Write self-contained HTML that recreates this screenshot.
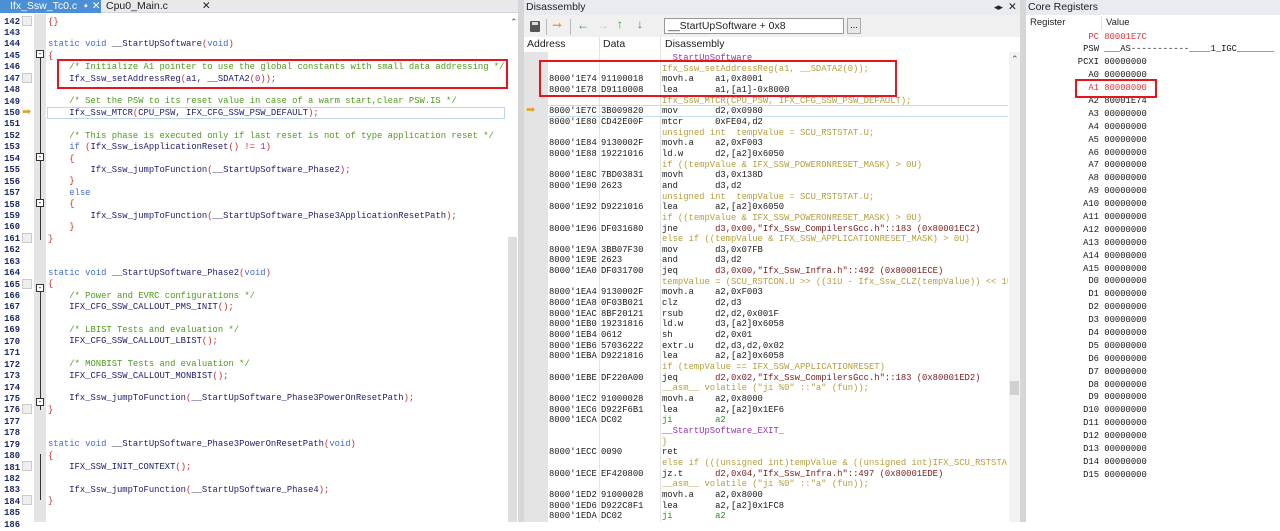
<!DOCTYPE html>
<html><head><meta charset="utf-8"><style>
*{margin:0;padding:0;box-sizing:border-box}
body{width:1280px;height:522px;overflow:hidden;background:#fff;font-family:"Liberation Sans",sans-serif;position:relative}
.mono{font-family:"Liberation Mono",monospace;font-size:8.85px}
.mono div{white-space:pre}
.abs{position:absolute}
.k{color:#3c6cd4}.f{color:#1c1c6a}.c{color:#4f9a1c}.p{color:#c0302a}.n{color:#a020a0}
.s{color:#b59f3b}.lb{color:#9234b0}.st{color:#7a1c1c}
#code div{height:11.43px;line-height:11.43px}
#dis div{height:10.67px;line-height:10.67px}
#dis div.x{padding-left:113px}
#dis i{font-style:normal;display:inline-block;width:52px}
#dis b{font-weight:normal;display:inline-block;width:61px}
#reg div{height:12.9px;line-height:12.9px}
#reg u{text-decoration:none;display:inline-block;width:73px;text-align:right}
</style></head><body>
<!-- left pane -->
<div class="abs" style="left:0;top:0;width:518px;height:13px;background:#e9e9e9;border-bottom:1px solid #cfd6e0"></div>
<div class="abs" style="left:0;top:0;width:101px;height:13px;background:#4b8fd6;color:#fff;font-size:10.5px;line-height:13px;padding-left:10px;white-space:nowrap;overflow:hidden">Ifx_Ssw_Tc0.c <span style="margin-left:4px">&#9642;</span> <span style="margin-left:1px">&#10005;</span></div>
<div class="abs" style="left:106px;top:0;height:13px;font-size:10.5px;line-height:13px;color:#222;white-space:nowrap">Cpu0_Main.c<span style="margin-left:34px">&#10005;</span></div>
<div class="abs" style="left:34px;top:14px;width:12px;height:508px;background:#e4e4e4"></div>
<div class="abs" style="left:508px;top:14px;width:10px;height:508px;background:#fff"></div>
<div class="abs" style="left:508px;top:237px;width:9px;height:285px;background:#dedede"></div>
<div class="abs" style="left:510px;top:17px;font-size:9px;color:#555">&#8963;</div>
<div class="abs" style="left:518px;top:0;width:6px;height:522px;background:#d6d6d6"></div>
<div class="abs" style="left:47px;top:107px;width:458px;height:12px;border:1px solid #bcd4ee"></div>
<div class="abs" style="left:40px;top:54px;width:1px;height:186px;background:#333"></div>
<div class="abs" style="left:40px;top:288px;width:1px;height:122px;background:#333"></div>
<div class="abs" style="left:40px;top:454px;width:1px;height:46px;background:#333"></div>
<div class="abs" style="left:36px;top:50px;width:8px;height:8px;border:1px solid #333;background:#fff;font-size:8px;line-height:5px;text-align:center">-</div>
<div class="abs" style="left:36px;top:153px;width:8px;height:8px;border:1px solid #333;background:#fff;font-size:8px;line-height:5px;text-align:center">-</div>
<div class="abs" style="left:36px;top:199px;width:8px;height:8px;border:1px solid #333;background:#fff;font-size:8px;line-height:5px;text-align:center">-</div>
<div class="abs" style="left:36px;top:284px;width:8px;height:8px;border:1px solid #333;background:#fff;font-size:8px;line-height:5px;text-align:center">-</div>
<div class="abs" style="left:36px;top:398px;width:8px;height:8px;border:1px solid #333;background:#fff;font-size:8px;line-height:5px;text-align:center">-</div>
<div class="abs" style="left:22px;top:16px;width:10px;height:10px;border:1px solid #ccc;background:#eee"></div>
<div class="abs" style="left:22px;top:73px;width:10px;height:10px;border:1px solid #ccc;background:#eee"></div>
<div class="abs" style="left:22px;top:233px;width:10px;height:10px;border:1px solid #ccc;background:#eee"></div>
<div class="abs" style="left:22px;top:279px;width:10px;height:10px;border:1px solid #ccc;background:#eee"></div>
<div class="abs" style="left:22px;top:404px;width:10px;height:10px;border:1px solid #ccc;background:#eee"></div>
<div class="abs" style="left:22px;top:461px;width:10px;height:10px;border:1px solid #ccc;background:#eee"></div>
<div class="abs" style="left:22px;top:495px;width:10px;height:10px;border:1px solid #ccc;background:#eee"></div>
<div class="abs" style="left:22px;top:108px;width:11px;height:9px;color:#e8a020;font-size:11px;line-height:9px">&#10145;</div>
<div class="abs mono" style="left:0;top:16.5px;width:20px;text-align:right;color:#1c2a6a;font-weight:bold;line-height:11.43px;white-space:pre">142
143
144
145
146
147
148
149
150
151
152
153
154
155
156
157
158
159
160
161
162
163
164
165
166
167
168
169
170
171
172
173
174
175
176
177
178
179
180
181
182
183
184
185
186</div>
<div class="abs mono" id="code" style="left:48px;top:16.5px;width:460px;overflow:hidden;height:506px">
<div><span class="p">{}</span></div>
<div> </div>
<div><span class="k">static void</span> <span class="f">__StartUpSoftware</span><span class="p">(</span><span class="k">void</span><span class="p">)</span></div>
<div><span class="p">{</span></div>
<div>    <span class="c">/* Initialize A1 pointer to use the global constants with small data addressing */</span></div>
<div>    <span class="f">Ifx_Ssw_setAddressReg</span><span class="p">(</span><span class="f">a1, __SDATA2</span><span class="p">(</span><span class="n">0</span><span class="p">));</span></div>
<div> </div>
<div>    <span class="c">/* Set the PSW to its reset value in case of a warm start,clear PSW.IS */</span></div>
<div>    <span class="f">Ifx_Ssw_MTCR</span><span class="p">(</span><span class="f">CPU_PSW, IFX_CFG_SSW_PSW_DEFAULT</span><span class="p">);</span></div>
<div> </div>
<div>    <span class="c">/* This phase is executed only if last reset is not of type application reset */</span></div>
<div>    <span class="k">if</span> <span class="p">(</span><span class="f">Ifx_Ssw_isApplicationReset</span><span class="p">() !=</span> <span class="n">1</span><span class="p">)</span></div>
<div>    <span class="p">{</span></div>
<div>        <span class="f">Ifx_Ssw_jumpToFunction</span><span class="p">(</span><span class="f">__StartUpSoftware_Phase2</span><span class="p">);</span></div>
<div>    <span class="p">}</span></div>
<div>    <span class="k">else</span></div>
<div>    <span class="p">{</span></div>
<div>        <span class="f">Ifx_Ssw_jumpToFunction</span><span class="p">(</span><span class="f">__StartUpSoftware_Phase3ApplicationResetPath</span><span class="p">);</span></div>
<div>    <span class="p">}</span></div>
<div><span class="p">}</span></div>
<div> </div>
<div> </div>
<div><span class="k">static void</span> <span class="f">__StartUpSoftware_Phase2</span><span class="p">(</span><span class="k">void</span><span class="p">)</span></div>
<div><span class="p">{</span></div>
<div>    <span class="c">/* Power and EVRC configurations */</span></div>
<div>    <span class="f">IFX_CFG_SSW_CALLOUT_PMS_INIT</span><span class="p">();</span></div>
<div> </div>
<div>    <span class="c">/* LBIST Tests and evaluation */</span></div>
<div>    <span class="f">IFX_CFG_SSW_CALLOUT_LBIST</span><span class="p">();</span></div>
<div> </div>
<div>    <span class="c">/* MONBIST Tests and evaluation */</span></div>
<div>    <span class="f">IFX_CFG_SSW_CALLOUT_MONBIST</span><span class="p">();</span></div>
<div> </div>
<div>    <span class="f">Ifx_Ssw_jumpToFunction</span><span class="p">(</span><span class="f">__StartUpSoftware_Phase3PowerOnResetPath</span><span class="p">);</span></div>
<div><span class="p">}</span></div>
<div> </div>
<div> </div>
<div><span class="k">static void</span> <span class="f">__StartUpSoftware_Phase3PowerOnResetPath</span><span class="p">(</span><span class="k">void</span><span class="p">)</span></div>
<div><span class="p">{</span></div>
<div>    <span class="f">IFX_SSW_INIT_CONTEXT</span><span class="p">();</span></div>
<div> </div>
<div>    <span class="f">Ifx_Ssw_jumpToFunction</span><span class="p">(</span><span class="f">__StartUpSoftware_Phase4</span><span class="p">);</span></div>
<div><span class="p">}</span></div>
</div>
<div class="abs" style="left:57px;top:59px;width:451px;height:30px;border:2px solid #e8141c"></div>

<!-- disassembly pane -->
<div class="abs" style="left:524px;top:0;width:496px;height:15px;background:#e9ebf0;font-size:10.5px;line-height:15px;padding-left:2px;color:#222">Disassembly<span class="abs" style="left:470px;top:0;font-size:9px">&#9666;&#9656;</span><span class="abs" style="left:484px;top:0">&#10005;</span></div>
<div class="abs" style="left:524px;top:15px;width:496px;height:22px;background:#f0f0f0"></div>
<div class="abs" style="left:530px;top:21px;width:10px;height:11px;background:#555;border-radius:1px"><div class="abs" style="left:2px;top:1px;width:6px;height:3px;background:#ddd"></div></div>
<div class="abs" style="left:546px;top:19px;width:1px;height:16px;background:#bbb"></div>
<div class="abs" style="left:552px;top:18px;color:#e8a020;font-size:12px">&#10142;</div>
<div class="abs" style="left:570px;top:19px;width:1px;height:16px;background:#bbb"></div>
<div class="abs" style="left:577px;top:18px;color:#2a9a2a;font-size:12px;font-weight:bold">&#8592;</div>
<div class="abs" style="left:597px;top:18px;color:#ccc;font-size:12px">&#8594;</div>
<div class="abs" style="left:617px;top:17px;color:#2a9a2a;font-size:12px;font-weight:bold">&#8593;</div>
<div class="abs" style="left:637px;top:17px;color:#2a9a2a;font-size:12px;font-weight:bold">&#8595;</div>
<div class="abs" style="left:664px;top:18px;width:180px;height:16px;border:1px solid #999;background:#fff;font-size:10.5px;line-height:14px;padding-left:3px;color:#222">__StartUpSoftware + 0x8</div>
<div class="abs" style="left:847px;top:18px;width:14px;height:16px;border:1px solid #aaa;background:#e8e8e8;font-size:9px;line-height:12px;text-align:center">...</div>
<div class="abs" style="left:524px;top:37px;width:496px;height:15px;background:#fff;font-size:10.5px;line-height:15px;color:#222"><span class="abs" style="left:3px">Address</span><span class="abs" style="left:79px">Data</span><span class="abs" style="left:141px">Disassembly</span></div>
<div class="abs" style="left:599px;top:37px;width:1px;height:15px;background:#e0e0e0"></div>
<div class="abs" style="left:660px;top:37px;width:1px;height:15px;background:#e0e0e0"></div>
<div class="abs" style="left:524px;top:52px;width:24px;height:470px;background:#e4e4e4"></div>
<div class="abs" style="left:599px;top:52px;width:1px;height:470px;background:#e4e4e4"></div>
<div class="abs" style="left:660px;top:52px;width:1px;height:470px;background:#e4e4e4"></div>
<div class="abs" style="left:548px;top:105px;width:460px;height:12px;border-top:1px solid #c8dcf0;border-bottom:1px solid #c8dcf0"></div>
<div class="abs" style="left:526px;top:105px;color:#e8a020;font-size:11px;line-height:11px">&#10145;</div>
<div class="abs" style="left:1009px;top:52px;width:11px;height:470px;background:#f2f2f2"></div>
<div class="abs" style="left:1010px;top:381px;width:9px;height:14px;background:#d0d0d0"></div>
<div class="abs" style="left:1011px;top:54px;font-size:9px;color:#555">&#8963;</div>
<div class="abs" style="left:1020px;top:0;width:6px;height:522px;background:#d6d6d6"></div>
<div class="abs mono" id="dis" style="left:549px;top:53px;width:459px;height:469px;overflow:hidden;color:#1a1a1a">
<div class="x"><span class="lb">__StartUpSoftware</span></div>
<div class="x"><span class="s">Ifx_Ssw_setAddressReg(a1, __SDATA2(0));</span></div>
<div><i>8000'1E74</i><b>91100018</b>movh.a    a1,0x8001</div>
<div><i>8000'1E78</i><b>D9110008</b>lea       a1,[a1]-0x8000</div>
<div class="x"><span class="s">Ifx_Ssw_MTCR(CPU_PSW, IFX_CFG_SSW_PSW_DEFAULT);</span></div>
<div><i>8000'1E7C</i><b>3B009820</b>mov       d2,0x0980</div>
<div><i>8000'1E80</i><b>CD42E00F</b>mtcr      0xFE04,d2</div>
<div class="x"><span class="s">unsigned int  tempValue = SCU_RSTSTAT.U;</span></div>
<div><i>8000'1E84</i><b>9130002F</b>movh.a    a2,0xF003</div>
<div><i>8000'1E88</i><b>19221016</b>ld.w      d2,[a2]0x6050</div>
<div class="x"><span class="s">if ((tempValue &amp; IFX_SSW_POWERONRESET_MASK) &gt; 0U)</span></div>
<div><i>8000'1E8C</i><b>7BD03831</b>movh      d3,0x138D</div>
<div><i>8000'1E90</i><b>2623</b>and       d3,d2</div>
<div class="x"><span class="s">unsigned int  tempValue = SCU_RSTSTAT.U;</span></div>
<div><i>8000'1E92</i><b>D9221016</b>lea       a2,[a2]0x6050</div>
<div class="x"><span class="s">if ((tempValue &amp; IFX_SSW_POWERONRESET_MASK) &gt; 0U)</span></div>
<div><i>8000'1E96</i><b>DF031680</b>jne       <span class="st">d3,0x00,"Ifx_Ssw_CompilersGcc.h"::183 (0x80001EC2)</span></div>
<div class="x"><span class="s">else if ((tempValue &amp; IFX_SSW_APPLICATIONRESET_MASK) &gt; 0U)</span></div>
<div><i>8000'1E9A</i><b>3BB07F30</b>mov       d3,0x07FB</div>
<div><i>8000'1E9E</i><b>2623</b>and       d3,d2</div>
<div><i>8000'1EA0</i><b>DF031700</b>jeq       <span class="st">d3,0x00,"Ifx_Ssw_Infra.h"::492 (0x80001ECE)</span></div>
<div class="x"><span class="s">tempValue = (SCU_RSTCON.U &gt;&gt; ((31U - Ifx_Ssw_CLZ(tempValue)) &lt;&lt; 1U</span></div>
<div><i>8000'1EA4</i><b>9130002F</b>movh.a    a2,0xF003</div>
<div><i>8000'1EA8</i><b>0F03B021</b>clz       d2,d3</div>
<div><i>8000'1EAC</i><b>8BF20121</b>rsub      d2,d2,0x001F</div>
<div><i>8000'1EB0</i><b>19231816</b>ld.w      d3,[a2]0x6058</div>
<div><i>8000'1EB4</i><b>0612</b>sh        d2,0x01</div>
<div><i>8000'1EB6</i><b>57036222</b>extr.u    d2,d3,d2,0x02</div>
<div><i>8000'1EBA</i><b>D9221816</b>lea       a2,[a2]0x6058</div>
<div class="x"><span class="s">if (tempValue == IFX_SSW_APPLICATIONRESET)</span></div>
<div><i>8000'1EBE</i><b>DF220A00</b>jeq       <span class="st">d2,0x02,"Ifx_Ssw_CompilersGcc.h"::183 (0x80001ED2)</span></div>
<div class="x"><span class="s">__asm__ volatile ("ji %0" ::"a" (fun));</span></div>
<div><i>8000'1EC2</i><b>91000028</b>movh.a    a2,0x8000</div>
<div><i>8000'1EC6</i><b>D922F6B1</b>lea       a2,[a2]0x1EF6</div>
<div><i>8000'1ECA</i><b>DC02</b><span style="color:#2a8a2a">ji        a2</span></div>
<div class="x"><span class="lb">__StartUpSoftware_EXIT_</span></div>
<div class="x"><span class="s">}</span></div>
<div><i>8000'1ECC</i><b>0090</b>ret</div>
<div class="x"><span class="s">else if (((unsigned int)tempValue &amp; ((unsigned int)IFX_SCU_RSTSTA</span></div>
<div><i>8000'1ECE</i><b>EF420800</b>jz.t      <span class="st">d2,0x04,"Ifx_Ssw_Infra.h"::497 (0x80001EDE)</span></div>
<div class="x"><span class="s">__asm__ volatile ("ji %0" ::"a" (fun));</span></div>
<div><i>8000'1ED2</i><b>91000028</b>movh.a    a2,0x8000</div>
<div><i>8000'1ED6</i><b>D922C8F1</b>lea       a2,[a2]0x1FC8</div>
<div><i>8000'1EDA</i><b>DC02</b><span style="color:#2a8a2a">ji        a2</span></div>
</div>
<div class="abs" style="left:539px;top:60px;width:358px;height:37px;border:2px solid #e8141c"></div>

<!-- core registers -->
<div class="abs" style="left:1026px;top:0;width:254px;height:15px;background:#e9ebf0;font-size:10.5px;line-height:15px;padding-left:2px;color:#222">Core Registers</div>
<div class="abs" style="left:1026px;top:15px;width:254px;height:16px;background:#fff;font-size:9.5px;line-height:16px;color:#222"><span class="abs" style="left:4px">Register</span><span class="abs" style="left:80px">Value</span></div>
<div class="abs" style="left:1101px;top:16px;width:1px;height:14px;background:#e0e0e0"></div>
<div class="abs mono" id="reg" style="left:1026px;top:30.5px;width:254px;color:#1a1a1a">
<div style="color:#e8323a"><u>PC</u> 80001E7C</div>
<div><u>PSW</u> ___AS-----------____1_IGC_______</div>
<div><u>PCXI</u> 00000000</div>
<div><u>A0</u> 00000000</div>
<div style="color:#e8323a"><u>A1</u> 80008000</div>
<div><u>A2</u> 80001E74</div>
<div><u>A3</u> 00000000</div>
<div><u>A4</u> 00000000</div>
<div><u>A5</u> 00000000</div>
<div><u>A6</u> 00000000</div>
<div><u>A7</u> 00000000</div>
<div><u>A8</u> 00000000</div>
<div><u>A9</u> 00000000</div>
<div><u>A10</u> 00000000</div>
<div><u>A11</u> 00000000</div>
<div><u>A12</u> 00000000</div>
<div><u>A13</u> 00000000</div>
<div><u>A14</u> 00000000</div>
<div><u>A15</u> 00000000</div>
<div><u>D0</u> 00000000</div>
<div><u>D1</u> 00000000</div>
<div><u>D2</u> 00000000</div>
<div><u>D3</u> 00000000</div>
<div><u>D4</u> 00000000</div>
<div><u>D5</u> 00000000</div>
<div><u>D6</u> 00000000</div>
<div><u>D7</u> 00000000</div>
<div><u>D8</u> 00000000</div>
<div><u>D9</u> 00000000</div>
<div><u>D10</u> 00000000</div>
<div><u>D11</u> 00000000</div>
<div><u>D12</u> 00000000</div>
<div><u>D13</u> 00000000</div>
<div><u>D14</u> 00000000</div>
<div><u>D15</u> 00000000</div>
</div>
<div class="abs" style="left:1075px;top:79px;width:82px;height:19px;border:2px solid #e8141c"></div>
</body></html>
